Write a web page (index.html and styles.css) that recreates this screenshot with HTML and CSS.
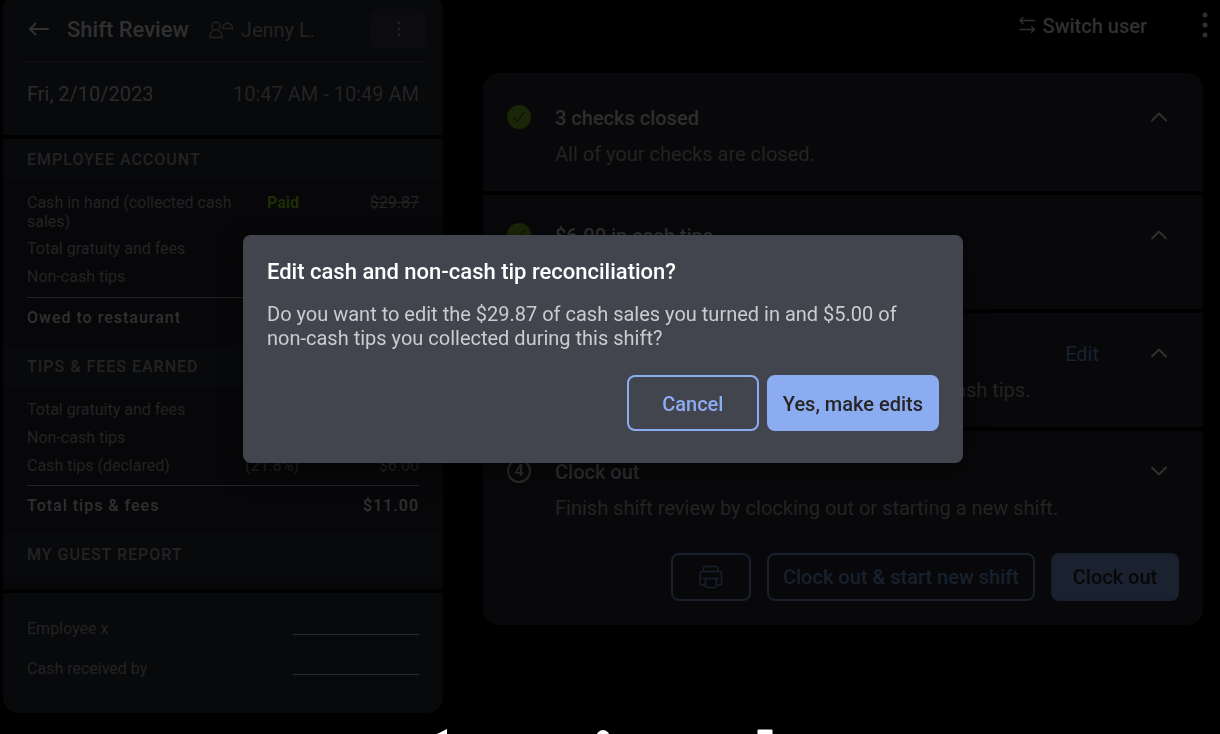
FILE: index.html
```html
<!DOCTYPE html>
<html lang="en">
<head>
  <meta charset="UTF-8">
  <meta name="viewport" content="width=device-width, initial-scale=1">
  <title>Shift Review</title>
  <link rel="stylesheet" href="styles.css">
</head>
<body>

<div class="app">
  <!-- Shift summary -->
  <aside class="receipt">
    <header class="receipt-head">
      <div class="head-bar">
        <button class="icon-btn" aria-label="Back">
          <svg width="24" height="24" viewBox="0 0 24 24" fill="none" stroke="currentColor" stroke-width="2" stroke-linecap="round" stroke-linejoin="round"><path d="M21 12H3.500M8.500 6.500L3 12L8.500 17.500"/></svg>
        </button>
        <h1>Shift Review</h1>
        <span class="user">
          <svg width="24" height="20" viewBox="0 0 24 20" fill="none" stroke="currentColor" stroke-width="1.400" stroke-linejoin="round" stroke-linecap="round"><circle cx="7" cy="6" r="4"/><path d="M4.500 10C2.300 11.500 1.200 14 1 17.500H13C12.800 14 11.700 11.500 9.500 10M13.500 8.500C13.800 5.200 15.800 3.500 18.500 3.500S23.200 5.200 23.500 8.500ZM18.500 3.500V2"/></svg>
          Jenny L.
        </span>
        <button class="more-btn" aria-label="More">
          <svg width="4" height="16" viewBox="0 0 4 16" fill="currentColor"><circle cx="2" cy="2" r="1.400"/><circle cx="2" cy="8" r="1.400"/><circle cx="2" cy="14" r="1.400"/></svg>
        </button>
      </div>
      <div class="shift-time">
        <span class="date">Fri, 2/10/2023</span>
        <span>10:47 AM - 10:49 AM</span>
      </div>
    </header>

    <div class="receipt-body">
      <h2>EMPLOYEE ACCOUNT</h2>
      <table>
        <tbody>
          <tr><td>Cash in hand (collected cash sales)</td><td class="mid paid">Paid</td><td class="amount"><s>$29.87</s></td></tr>
          <tr><td>Total gratuity and fees</td><td class="mid"></td><td class="amount"></td></tr>
          <tr><td>Non-cash tips</td><td class="mid"></td><td class="amount"></td></tr>
        </tbody>
        <tfoot>
          <tr><th scope="row">Owed to restaurant</th><td class="mid"></td><td class="amount"></td></tr>
        </tfoot>
      </table>

      <h2>TIPS &amp; FEES EARNED</h2>
      <table>
        <tbody>
          <tr><td>Total gratuity and fees</td><td class="mid"></td><td class="amount"></td></tr>
          <tr><td>Non-cash tips</td><td class="mid"></td><td class="amount"></td></tr>
          <tr><td>Cash tips (declared)</td><td class="mid">(21.8%)</td><td class="amount">$6.00</td></tr>
        </tbody>
        <tfoot>
          <tr><th scope="row">Total tips &amp; fees</th><td class="mid"></td><td class="amount">$11.00</td></tr>
        </tfoot>
      </table>

      <h2>MY GUEST REPORT</h2>
    </div>

    <footer class="signatures">
      <div class="sign-row"><span>Employee x</span><span class="sign-line"></span></div>
      <div class="sign-row"><span>Cash received by</span><span class="sign-line"></span></div>
    </footer>
  </aside>

  <!-- Checkout steps -->
  <main class="content">
    <div class="topbar">
      <button class="switch-btn">
        <svg width="18" height="20" viewBox="0 0 18 20" fill="none" stroke="currentColor" stroke-width="1.400" stroke-linecap="round" stroke-linejoin="round"><path d="M16.500 5.500H2M5 2.500L2 5.500L5 8.500M2 14.500H16.500M13.500 11.500L16.500 14.500L13.500 17.500"/></svg>
        <span>Switch user</span>
      </button>
      <button class="icon-btn" aria-label="Menu">
        <svg width="24" height="28" viewBox="0 0 24 28" fill="currentColor"><circle cx="12" cy="4" r="2.500"/><circle cx="12" cy="14" r="2.500"/><circle cx="12" cy="24" r="2.500"/></svg>
      </button>
    </div>

    <div class="steps">
      <section class="step">
        <svg class="check" width="24" height="24" viewBox="0 0 24 24" fill="none"><circle cx="12" cy="12" r="12" fill="currentColor"/><path d="M6.500 12.500L10.500 16.500L17.500 7" stroke="#08080a" stroke-width="1"/></svg>
        <div class="step-text">
          <h3>3 checks closed</h3>
          <p>All of your checks are closed.</p>
        </div>
        <button class="icon-btn" aria-label="Collapse">
          <svg width="24" height="24" viewBox="0 0 24 24" fill="none" stroke="currentColor" stroke-width="2" stroke-linecap="round" stroke-linejoin="round"><path d="M5 15.500L12 8.500L19 15.500"/></svg>
        </button>
      </section>

      <section class="step">
        <svg class="check" width="24" height="24" viewBox="0 0 24 24" fill="none"><circle cx="12" cy="12" r="12" fill="currentColor"/><path d="M6.500 12.500L10.500 16.500L17.500 7" stroke="#08080a" stroke-width="1"/></svg>
        <div class="step-text">
          <h3>$6.00 in cash tips</h3>
        </div>
        <button class="icon-btn" aria-label="Collapse">
          <svg width="24" height="24" viewBox="0 0 24 24" fill="none" stroke="currentColor" stroke-width="2" stroke-linecap="round" stroke-linejoin="round"><path d="M5 15.500L12 8.500L19 15.500"/></svg>
        </button>
      </section>

      <section class="step">
        <svg class="check" width="24" height="24" viewBox="0 0 24 24" fill="none"><circle cx="12" cy="12" r="12" fill="currentColor"/><path d="M6.500 12.500L10.500 16.500L17.500 7" stroke="#08080a" stroke-width="1"/></svg>
        <div class="step-text">
          <h3>Reconciled</h3>
          <p>Paid $29.87 of cash sales and $5.00 of non-cash tips.</p>
        </div>
        <a class="edit" href="#">Edit</a>
        <button class="icon-btn" aria-label="Collapse">
          <svg width="24" height="24" viewBox="0 0 24 24" fill="none" stroke="currentColor" stroke-width="2" stroke-linecap="round" stroke-linejoin="round"><path d="M5 15.500L12 8.500L19 15.500"/></svg>
        </button>
      </section>

      <section class="step">
        <span class="number">4</span>
        <div class="step-text">
          <h3>Clock out</h3>
          <p>Finish shift review by clocking out or starting a new shift.</p>
        </div>
        <button class="icon-btn" aria-label="Expand">
          <svg width="24" height="24" viewBox="0 0 24 24" fill="none" stroke="currentColor" stroke-width="2" stroke-linecap="round" stroke-linejoin="round"><path d="M5 8.500L12 15.500L19 8.500"/></svg>
        </button>
        <div class="step-actions">
          <button class="btn print" aria-label="Print">
            <svg width="24" height="24" viewBox="0 0 24 24" fill="none" stroke="currentColor" stroke-width="1.500" stroke-linejoin="round" stroke-linecap="round"><path d="M4.500 6V3Q4.500 1.500 6 1.500H17.500Q19 1.500 19 3V6M6 20H3Q1 20 1 18V8.500Q1 6.500 3 6.500H20.500Q22.500 6.500 22.500 8.500V18Q22.500 20 20.500 20H18M4 13.500H19.500M6.500 13.500V20.500Q6.500 22.500 8.500 22.500H15.500Q17.500 22.500 17.500 20.500V13.500"/></svg>
          </button>
          <button class="btn">Clock out &amp; start new shift</button>
          <button class="btn filled">Clock out</button>
        </div>
      </section>
    </div>
  </main>
</div>

<!-- Confirm dialog -->
<div class="overlay">
  <div class="dialog" role="dialog" aria-modal="true" aria-labelledby="dialogTitle">
    <h2 id="dialogTitle">Edit cash and non-cash tip reconciliation?</h2>
    <p>Do you want to edit the $29.87 of cash sales you turned in and $5.00 of non-cash tips you collected during this shift?</p>
    <div class="dialog-actions">
      <button class="cancel">Cancel</button>
      <button class="confirm">Yes, make edits</button>
    </div>
  </div>
</div>

<!-- System navigation -->
<nav class="system-nav">
  <svg width="20" height="5" viewBox="0 0 20 5"><path d="M18 0V5H8Z" fill="#fff"/></svg>
  <svg width="20" height="5" viewBox="0 0 20 5"><circle cx="10" cy="7.500" r="6.500" fill="#fff"/></svg>
  <svg width="20" height="5" viewBox="0 0 20 5"><rect x="0.500" y="0.500" width="15" height="15" rx="1" fill="#fff"/></svg>
</nav>

</body>
</html>
```

FILE: styles.css
```css
* {
  box-sizing: border-box;
}
body {
  margin: 0;
  background: #000;
  color: #232323;
  font-family: Roboto, sans-serif;
  font-size: 20px;
  line-height: 24px;
  overflow: hidden;
}
h1, h2, h3, p {
  margin: 0;
  font-weight: 500;
}
p {
  font-weight: 400;
}
button {
  padding: 0;
  border: none;
  background: none;
  color: inherit;
  font: inherit;
  font-weight: 500;
  cursor: pointer;
}
svg {
  display: block;
  flex-shrink: 0;
}
.icon-btn {
  color: #303030;
}
.app {
  display: flex;
  align-items: flex-start;
  gap: 40px;
  padding-left: 3px;
}

/* Receipt */
.receipt {
  flex: 0 0 440px;
  display: flex;
  flex-direction: column;
  gap: 4px;
  margin-top: -7px;
}
.receipt-head {
  padding: 16px 16px 29px;
  background: #08090b;
  border-radius: 16px 16px 0 0;
}
.head-bar {
  display: flex;
  align-items: center;
  padding: 0 0 12px 8px;
  border-bottom: 2px solid #0d0d0f;
}
.head-bar h1 {
  margin: 0 20px 0 16px;
  padding-top: 2px;
  color: #303030;
  font-size: 22px;
}
.user {
  display: flex;
  align-items: center;
  gap: 8px;
  padding-top: 2px;
}
.more-btn {
  display: flex;
  align-items: center;
  justify-content: center;
  width: 56px;
  height: 40px;
  margin-left: auto;
  border-radius: 8px;
  background: #0c0c0e;
  color: #1a2230;
}
.shift-time {
  display: flex;
  justify-content: space-between;
  padding: 19px 8px 0;
}
.shift-time .date {
  color: #2b2b2b;
}
.receipt-body {
  padding-bottom: 14px;
  background: #070709;
  font-size: 16px;
}
.receipt-body h2 {
  padding: 9px 24px 8px;
  background: #08090b;
  font-size: 16px;
  letter-spacing: 1px;
}
.receipt-body table {
  width: calc(100% - 48px);
  margin: 9px 24px 15px;
  border-collapse: collapse;
  table-layout: fixed;
  line-height: 19px;
}
.receipt-body td,
.receipt-body th {
  height: 28px;
  padding: 4px 0;
  vertical-align: top;
  text-align: left;
}
.receipt-body .mid {
  width: 56px;
  text-align: right;
}
.receipt-body .amount {
  width: 120px;
  text-align: right;
}
.receipt-body .paid {
  color: #1d2d05;
  font-weight: 700;
}
.receipt-body tbody tr:last-child td {
  height: 34px;
}
.receipt-body tfoot td,
.receipt-body tfoot th {
  padding-top: 10px;
  border-top: 1px solid #232323;
  color: #303030;
  font-weight: 500;
  letter-spacing: 1px;
}
.signatures {
  display: flex;
  flex-direction: column;
  gap: 16px;
  padding: 24px 24px 32px;
  background: #08090b;
  border-radius: 0 0 16px 16px;
  font-size: 16px;
}
.sign-row {
  display: flex;
  justify-content: space-between;
}
.sign-line {
  width: 126px;
  height: 18px;
  border-bottom: 1px solid #2a2a2a;
}

/* Steps */
.content {
  flex: 1;
  min-width: 0;
}
.topbar {
  display: flex;
  align-items: center;
  justify-content: flex-end;
  gap: 46px;
  height: 50px;
  padding-right: 3px;
  margin-bottom: 23px;
}
.switch-btn {
  display: flex;
  align-items: center;
  gap: 7px;
  color: #303030;
}
.switch-btn span {
  padding-top: 2px;
}
.steps {
  display: flex;
  flex-direction: column;
  gap: 4px;
  margin-right: 17px;
}
.step {
  display: flex;
  flex-wrap: wrap;
  align-items: flex-start;
  min-height: 114px;
  padding: 28px 24px 24px;
  background: #08080a;
}
.step:first-child {
  padding-top: 32px;
  min-height: 118px;
  border-radius: 16px 16px 0 0;
}
.step:last-child {
  border-radius: 0 0 16px 16px;
}
.step > .icon-btn {
  margin-right: 8px;
}
.check {
  color: #1a2608;
}
.number {
  display: flex;
  align-items: center;
  justify-content: center;
  width: 24px;
  height: 24px;
  border: 2px solid #2b2b2b;
  border-radius: 50%;
  color: #303030;
  font-size: 16px;
  font-weight: 500;
}
.step-text {
  flex: 1;
  padding: 1px 0 0 24px;
}
.step-text h3 {
  margin-bottom: 12px;
  color: #2e2e2e;
  font-size: 20px;
}
.step-text p {
  white-space: nowrap;
}
.edit {
  margin-right: 48px;
  padding-top: 1px;
  color: #1a2230;
  text-decoration: none;
}
.step-actions {
  display: flex;
  justify-content: flex-end;
  gap: 16px;
  width: 100%;
  margin-top: 33px;
}
.btn {
  min-width: 128px;
  height: 48px;
  padding: 0 14px;
  border: 2px solid #18202d;
  border-radius: 8px;
  color: #18202d;
}
.btn.print {
  display: flex;
  align-items: center;
  justify-content: center;
  min-width: 80px;
}
.btn.filled {
  background: #1a2230;
  color: #070709;
}

/* Dialog */
.overlay {
  position: fixed;
  inset: 0 14px 36px 0;
  display: flex;
  align-items: center;
  justify-content: center;
}
.dialog {
  width: 720px;
  padding: 25px 24px 32px;
  border-radius: 8px;
  background: #43454e;
  box-shadow: 0 8px 24px rgba(0, 0, 0, 0.4);
  color: #cbccce;
}
.dialog h2 {
  margin-bottom: 18px;
  color: #fff;
  font-size: 22px;
}
.dialog-actions {
  display: flex;
  justify-content: flex-end;
  gap: 8px;
  margin-top: 25px;
}
.dialog-actions button {
  min-width: 132px;
  height: 56px;
  padding: 2px 14px 0;
  border: 2px solid #8cacf2;
  border-radius: 8px;
  color: #8cacf2;
}
.dialog-actions .confirm {
  background: #8cacf2;
  color: #252525;
}

/* System navigation */
.system-nav {
  position: fixed;
  right: 14px;
  bottom: 0;
  left: 0;
  display: flex;
  justify-content: center;
  gap: 144px;
}
```
